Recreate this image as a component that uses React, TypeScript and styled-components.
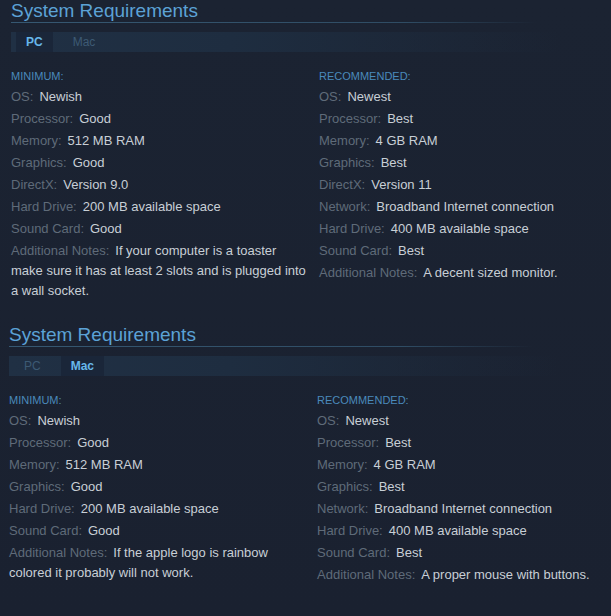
import React from "react";
import styled, { createGlobalStyle } from "styled-components";

const GlobalStyle = createGlobalStyle`
  html, body {
    margin: 0;
    padding: 0;
    background: #1b2231;
  }
  body {
    font-family: "Liberation Sans", Arial, sans-serif;
    width: 611px;
    height: 616px;
    overflow: hidden;
  }
`;

const Page = styled.div`
  display: flex;
  flex-direction: column;
  gap: 21px;
  min-height: 616px;
  background: linear-gradient(180deg, #1b2332 0%, #1a2130 100%);
`;

const Section = styled.section<{ $inset: number }>`
  display: flex;
  flex-direction: column;
  padding-left: ${(p) => p.$inset}px;
`;

const Title = styled.h2`
  margin: 0;
  font-size: 19px;
  line-height: 22px;
  height: 22px;
  font-weight: 400;
  color: #5ca2d6;
  white-space: nowrap;
`;

const Rule = styled.div`
  width: 525px;
  height: 1px;
  margin-bottom: 9px;
  background: linear-gradient(90deg, #365872 0%, #2f4c64 75%, rgba(47, 76, 100, 0) 100%);
`;

const TabBar = styled.div`
  display: flex;
  gap: 10px;
  width: 545px;
  height: 20px;
  padding-left: 5px;
  background: linear-gradient(90deg, #203044 0%, #1e2d40 40%, rgba(30, 45, 64, 0) 100%);
`;

const Tab = styled.div<{ $active?: boolean }>`
  display: flex;
  align-items: center;
  padding: 0 10px;
  height: 20px;
  font-size: 12px;
  font-weight: ${(p) => (p.$active ? 700 : 400)};
  color: ${(p) => (p.$active ? "#67b7ea" : "#3d5a74")};
  background: ${(p) => (p.$active ? "#1a2639" : "transparent")};
`;

const Columns = styled.div`
  display: grid;
  grid-template-columns: 296px 1fr;
  column-gap: 12px;
  margin-top: 14px;
  align-items: start;
`;

const Column = styled.div`
  display: flex;
  flex-direction: column;
`;

const Heading = styled.div`
  font-size: 11px;
  line-height: 20px;
  margin-bottom: 1px;
  color: #4a8abb;
  text-transform: uppercase;
`;

const Row = styled.div`
  font-size: 13px;
  line-height: 20px;
  margin-bottom: 2px;
  color: #c8cfd6;
`;

const Label = styled.span`
  color: #5f6b79;
  margin-right: 6px;
`;

type Spec = [string, string];
type ReqColumn = { heading: string; specs: Spec[] };
type ReqSection = { inset: number; active: "PC" | "Mac"; cols: ReqColumn[] };

const sections: ReqSection[] = [
  {
    inset: 11,
    active: "PC",
    cols: [
      {
        heading: "Minimum:",
        specs: [
          ["OS:", "Newish"],
          ["Processor:", "Good"],
          ["Memory:", "512 MB RAM"],
          ["Graphics:", "Good"],
          ["DirectX:", "Version 9.0"],
          ["Hard Drive:", "200 MB available space"],
          ["Sound Card:", "Good"],
          [
            "Additional Notes:",
            "If your computer is a toaster make sure it has at least 2 slots and is plugged into a wall socket.",
          ],
        ],
      },
      {
        heading: "Recommended:",
        specs: [
          ["OS:", "Newest"],
          ["Processor:", "Best"],
          ["Memory:", "4 GB RAM"],
          ["Graphics:", "Best"],
          ["DirectX:", "Version 11"],
          ["Network:", "Broadband Internet connection"],
          ["Hard Drive:", "400 MB available space"],
          ["Sound Card:", "Best"],
          ["Additional Notes:", "A decent sized monitor."],
        ],
      },
    ],
  },
  {
    inset: 9,
    active: "Mac",
    cols: [
      {
        heading: "Minimum:",
        specs: [
          ["OS:", "Newish"],
          ["Processor:", "Good"],
          ["Memory:", "512 MB RAM"],
          ["Graphics:", "Good"],
          ["Hard Drive:", "200 MB available space"],
          ["Sound Card:", "Good"],
          [
            "Additional Notes:",
            "If the apple logo is rainbow colored it probably will not work.",
          ],
        ],
      },
      {
        heading: "Recommended:",
        specs: [
          ["OS:", "Newest"],
          ["Processor:", "Best"],
          ["Memory:", "4 GB RAM"],
          ["Graphics:", "Best"],
          ["Network:", "Broadband Internet connection"],
          ["Hard Drive:", "400 MB available space"],
          ["Sound Card:", "Best"],
          ["Additional Notes:", "A proper mouse with buttons."],
        ],
      },
    ],
  },
];

export default function App() {
  return (
    <>
      <GlobalStyle />
      <Page>
        {sections.map((s, i) => (
          <Section key={i} $inset={s.inset}>
            <Title>System Requirements</Title>
            <Rule />
            <TabBar>
              <Tab $active={s.active === "PC"}>PC</Tab>
              <Tab $active={s.active === "Mac"}>Mac</Tab>
            </TabBar>
            <Columns>
              {s.cols.map((c) => (
                <Column key={c.heading}>
                  <Heading>{c.heading}</Heading>
                  {c.specs.map(([label, value]) => (
                    <Row key={label}>
                      <Label>{label}</Label>
                      {value}
                    </Row>
                  ))}
                </Column>
              ))}
            </Columns>
          </Section>
        ))}
      </Page>
    </>
  );
}
